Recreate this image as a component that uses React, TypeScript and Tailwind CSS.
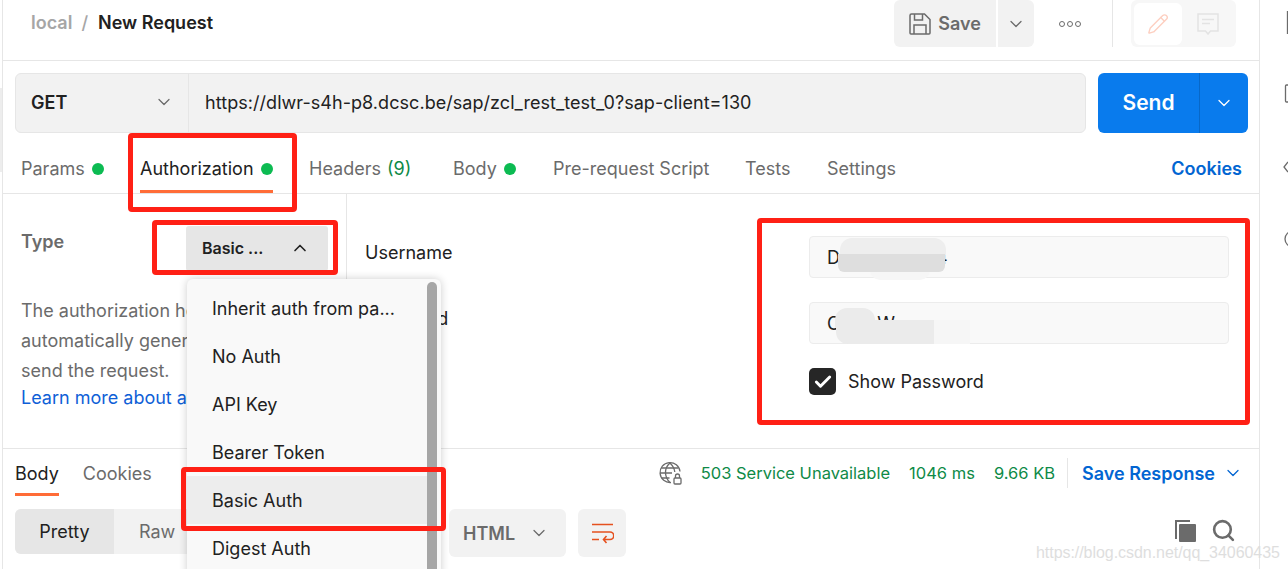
import React from 'react';
import { ChevronDown, ChevronUp, Check, Search, Pencil } from 'lucide-react';

const Dot = () => <span className="w-3 h-3 rounded-full bg-[#0cbb52] inline-block" />;

const authTypes = ['Inherit auth from pa...', 'No Auth', 'API Key', 'Bearer Token', 'Basic Auth', 'Digest Auth'];

const App: React.FC = () => {
  return (
    <div className="relative w-[1288px] h-[569px] overflow-hidden bg-white font-['Inter',sans-serif] text-[18px] text-[#212121]">
      <div className="ml-[2px] w-[1258px] h-[569px] border-x border-[#e6e6e6] flex flex-col">
        {/* title bar */}
        <div className="h-[61px] shrink-0 flex items-start justify-between border-b border-[#e6e6e6] pl-[28px] pr-[23px]">
          <div className="flex items-center h-[45px] gap-[9px] font-semibold">
            <span className="text-[#a6a6a6]">local</span>
            <span className="text-[#a6a6a6] font-medium">/</span>
            <span className="ml-[1px]">New Request</span>
          </div>
          <div className="flex items-center h-[47px]">
            <div className="w-[102px] h-[47px] rounded-l-md bg-[#f2f2f2] flex items-center justify-center gap-[7px] text-[#6b6b6b] font-semibold">
              <svg className="w-[22px] h-[22px]" viewBox="0 0 22 22" fill="none" stroke="currentColor" strokeWidth="1.5">
                <path d="M2.500 1h13l5.500 5.500v13.500a1 1 0 0 1-1 1H2a1 1 0 0 1-1-1V2.500A1.500 1.500 0 0 1 2.500 1z" />
                <path d="M5.500 1v6h8V1M5 21v-9h12v9" />
              </svg>
              Save
            </div>
            <div className="ml-[2px] w-[36px] h-[47px] rounded-r-md bg-[#f2f2f2] flex items-center justify-center">
              <ChevronDown className="w-5 h-5 text-[#6b6b6b]" strokeWidth={1.5} />
            </div>
            <div className="w-[72px] mr-[6px] flex justify-center gap-[2px]">
              <span className="w-[6px] h-[6px] rounded-full border border-[#6b6b6b]" />
              <span className="w-[6px] h-[6px] rounded-full border border-[#6b6b6b]" />
              <span className="w-[6px] h-[6px] rounded-full border border-[#6b6b6b]" />
            </div>
            <div className="w-px h-[47px] bg-[#e6e6e6] mr-[18px]" />
            <div className="w-[105px] h-[47px] rounded-md bg-[#f7f7f7] flex items-center pl-[3px]">
              <div className="w-[48px] h-[42px] rounded-md bg-white flex items-center justify-center">
                <Pencil className="w-[22px] h-[22px] text-[#fdcfc0]" strokeWidth={1.5} />
              </div>
              <div className="w-[52px] flex justify-center">
                <svg className="w-[22px] h-[22px] text-[#e3e3e3]" viewBox="0 0 22 22" fill="none" stroke="currentColor" strokeWidth="1.5">
                  <path d="M1 1h20v17h-7.500L11 21l-2.500-3H1z" />
                  <path d="M5 6.500h12M5 10.500h8" />
                </svg>
              </div>
            </div>
          </div>
        </div>

        {/* url row */}
        <div className="h-[72px] shrink-0 flex items-end pl-[12px] pr-[11px]">
          <div className="flex-1 h-[60px] flex rounded-md border border-[#e6e6e6] bg-[#f2f2f2]">
            <div className="w-[173px] border-r border-[#e6e6e6] flex items-center justify-between pl-[15px] pr-[14px] pb-[2px] font-semibold">
              GET
              <ChevronDown className="w-5 h-5 text-[#6b6b6b]" strokeWidth={1.5} />
            </div>
            <div className="flex-1 flex items-center pl-[16px] pb-[2px] tracking-[0.05px]">
              https://dlwr-s4h-p8.dcsc.be/sap/zcl_rest_test_0?sap-client=130
            </div>
          </div>
          <div className="ml-[12px] w-[150px] h-[60px] rounded-md bg-[#097bed] flex text-white">
            <div className="flex-1 flex items-center justify-center text-[21px] font-semibold">Send</div>
            <div className="w-[49px] border-l border-[#0768c9] flex items-center justify-center">
              <ChevronDown className="w-5 h-5" strokeWidth={1.5} />
            </div>
          </div>
        </div>

        {/* request tabs */}
        <div className="h-[61px] shrink-0 flex items-center border-b border-[#e6e6e6] pt-[11px] pl-[18px] pr-[17px] text-[#6b6b6b]">
          <div className="flex items-center gap-[7px] w-[119px]">Params <Dot /></div>
          <div className="relative flex items-center gap-[7px] w-[169px] text-[#212121]">
            Authorization <Dot />
            <div className="absolute left-0 top-[35px] w-[133px] h-[3px] bg-[#ff6c37]" />
          </div>
          <div className="w-[144px]">Headers <span className="text-[#0e8a47] ml-[1px]">(9)</span></div>
          <div className="flex items-center gap-[7px] w-[100px]">Body <Dot /></div>
          <div className="w-[192px]">Pre-request Script</div>
          <div className="w-[82px]">Tests</div>
          <div className="flex-1">Settings</div>
          <div className="text-[#0265d2] font-semibold">Cookies</div>
        </div>

        {/* auth panel */}
        <div className="h-[255px] shrink-0 flex border-b border-[#e6e6e6]">
          <div className="w-[344px] shrink-0 border-r border-[#e6e6e6] pl-[18px] pt-[32px] text-[#6b6b6b]">
            <div className="flex items-start">
              <span className="font-semibold w-[165px] leading-[32px]">Type</span>
              <div className="w-[142px] h-[45px] pb-[2px] rounded-[3px] bg-[#e6e6e6] flex items-center justify-between pl-[16px] pr-[18px] text-[#212121] font-semibold text-[16px]">
                Basic ...
                <ChevronUp className="w-5 h-5" strokeWidth={2} />
              </div>
            </div>
            <div className="mt-[25px] leading-[30px] whitespace-nowrap">
              <p>The authorization header will be</p>
              <p>automatically generated when you</p>
              <p>send the request.</p>
              <p className="text-[#0f5fd7] -mt-[3px]">Learn more about authorization</p>
            </div>
          </div>
          <div className="flex-1 flex pl-[18px] pr-[30px] pt-[42px]">
            <div className="w-[444px] text-[#212121]">
              <div className="leading-[34px]">Username</div>
              <div className="leading-[34px] mt-[32px]">Password</div>
            </div>
            <div className="flex-1">
              <div className="h-[42px] rounded-[4px] border border-[#ececec] bg-[#f9f9f9] flex items-center pl-[17px]">
                D<span className="ml-[96px]">4</span>
              </div>
              <div className="h-[42px] mt-[24px] rounded-[4px] border border-[#ececec] bg-[#f9f9f9] flex items-center pl-[17px]">
                C<span className="ml-[37px]">Wene</span>
              </div>
              <div className="mt-[24px] flex items-center gap-[13px]">
                <div className="w-[27px] h-[27px] rounded-[5px] bg-[#262626] flex items-center justify-center">
                  <Check className="w-5 h-5 text-white" strokeWidth={3.5} />
                </div>
                <span className="-ml-[1px]">Show Password</span>
              </div>
            </div>
          </div>
        </div>

        {/* response bar */}
        <div className="h-[50px] shrink-0 flex items-center justify-between pl-[12px] pr-[16px] pb-[2px]">
          <div className="flex items-center text-[#6b6b6b]">
            <div className="relative text-[#212121] mr-[24px]">
              Body
              <div className="absolute left-0 top-[33px] w-[44px] h-[3px] bg-[#ff6c37]" />
            </div>
            <span>Cookies</span>
          </div>
          <div className="flex items-center text-[#0e8a47] text-[16.5px]">
            <svg className="w-[24px] h-[24px] mr-[19px] text-[#6b6b6b]" viewBox="0 0 24 24" fill="none" stroke="currentColor" strokeWidth="1.3">
              <path d="M13 21.500a10 10 0 1 1 9-11" />
              <path d="M2 12h12M3.500 7h17M3.500 17h8" />
              <path d="M12 2c-6 5-6 14 0 19.500M12 2c3 3 4.500 6 4.800 9" />
              <rect x="16" y="17" width="7" height="6" rx="1" />
              <path d="M17.500 17v-2a2 2 0 0 1 4 0v2" />
            </svg>
            <span>503 Service Unavailable</span>
            <span className="ml-[19px]">1046 ms</span>
            <span className="ml-[19px]">9.66 KB</span>
            <div className="w-px h-[30px] bg-[#e6e6e6] ml-[12px] mr-[14px]" />
            <span className="text-[#0265d2] font-semibold text-[18px]">Save Response</span>
            <ChevronDown className="w-5 h-5 ml-[8px] text-[#0265d2]" strokeWidth={1.5} />
          </div>
        </div>

        {/* response toolbar */}
        <div className="flex items-start pl-[12px] pr-[21px] pt-[10px]">
          <div className="flex h-[45px] rounded-md bg-[#f2f2f2] w-[200px] overflow-hidden">
            <div className="w-[99px] bg-[#e6e6e6] flex items-center justify-center">Pretty</div>
            <div className="pl-[25px] flex items-center text-[#6b6b6b]">Raw</div>
          </div>
          <div className="ml-[234px] w-[117px] h-[48px] rounded-md bg-[#f2f2f2] flex items-center justify-between pl-[14px] pr-[17px] text-[#6b6b6b] font-semibold">
            HTML
            <ChevronDown className="w-5 h-5" strokeWidth={1.5} />
          </div>
          <div className="ml-[12px] w-[48px] h-[48px] rounded-md bg-[#f2f2f2] flex items-center justify-center">
            <svg className="w-[24px] h-[24px] text-[#e5511f]" viewBox="0 0 24 24" fill="none" stroke="currentColor" strokeWidth="1.6">
              <path d="M2 3.500h21M2 11h18a3.500 3.500 0 0 1 0 7.500h-6M2 18.500h7M16.500 15l-3 3.500 3 3.500" />
            </svg>
          </div>
          <div className="flex-1 flex justify-end items-center gap-[14px] h-[43px] pr-[2px] text-[#6b6b6b]">
            <svg className="w-[24px] h-[24px]" viewBox="0 0 24 24" fill="currentColor">
              <path d="M2 1h15v2H4v17H2z" />
              <rect x="6" y="5" width="17" height="18" rx="1" />
            </svg>
            <Search className="w-[25px] h-[25px]" strokeWidth={2.5} />
          </div>
        </div>
      </div>

      {/* edges of the neighbouring panes */}
      <div className="absolute left-0 top-[88px] w-[2px] h-[84px] bg-[#ededed]" />
      <svg className="absolute left-[1278px] top-0 w-[10px] h-[250px] text-[#6b6b6b]" viewBox="0 0 10 250" fill="none" stroke="currentColor" strokeWidth="1.3">
        <path d="M9.500 11v23" />
        <rect x="7.500" y="85" width="10" height="17" rx="1" />
        <path d="M10 162l-4 5 4 5" />
        <circle cx="15" cy="239" r="8" />
      </svg>

      {/* auth type dropdown */}
      <div className="absolute left-[187px] top-[279px] w-[254px] h-[300px] pt-[5px] rounded-md bg-[#f9f9f9] shadow-[0_0_8px_rgba(0,0,0,0.2)]">
        {authTypes.map((t) => (
          <div key={t} className={`h-[48px] mr-[14px] pl-[25px] flex items-center ${t === 'Basic Auth' ? 'bg-[#ededed]' : ''}`}>
            {t}
          </div>
        ))}
        <div className="absolute right-[4px] top-[3px] bottom-0 w-[10px] rounded-full bg-[#a6a6a6]" />
      </div>

      {/* redaction smudges */}
      <div className="absolute left-[870px] top-[270px] w-[60px] h-[10px] rounded-b-xl bg-[#f6f6f6]" />
      <div className="absolute left-[840px] top-[238px] w-[106px] h-[17px] rounded-t-xl bg-[#eeeeee]" />
      <div className="absolute left-[838px] top-[254px] w-[107px] h-[18px] rounded-b-md bg-[#dedede]" />
      <div className="absolute left-[835px] top-[308px] w-[40px] h-[20px] rounded-t-xl bg-[#ebebeb]" />
      <div className="absolute left-[836px] top-[320px] w-[98px] h-[24px] rounded-bl-xl bg-[#ebebeb]" />
      <div className="absolute left-[934px] top-[320px] w-[36px] h-[24px] bg-[#f6f6f6]" />

      {/* red annotation boxes */}
      <div className="absolute left-[128px] top-[133px] w-[169px] h-[79px] rounded-[4px] border-[5px] border-[#ff2015]" />
      <div className="absolute left-[152px] top-[220px] w-[186px] h-[55px] rounded-[4px] border-[5px] border-[#ff2015]" />
      <div className="absolute left-[757px] top-[218px] w-[493px] h-[207px] rounded-[4px] border-[5px] border-[#ff2015]" />
      <div className="absolute left-[181px] top-[467px] w-[265px] h-[64px] rounded-[4px] border-[5px] border-[#ff2015]" />

      {/* watermark */}
      <div className="absolute left-[1036px] top-[541px] text-[16px] tracking-[-0.05px] text-[#dedede] font-['Liberation_Sans',sans-serif]">
        https://blog.csdn.net/qq_34060435
      </div>
    </div>
  );
};

export default App;
